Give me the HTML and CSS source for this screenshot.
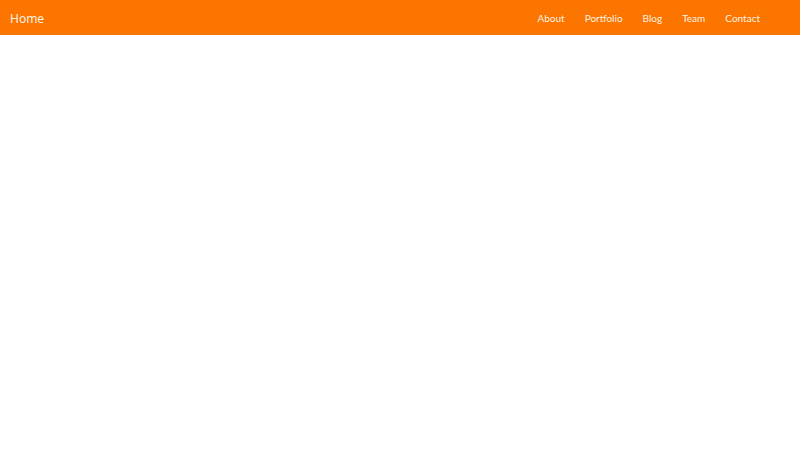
FILE: index.html
```html
<!DOCTYPE html>
<html lang="en">
<head>
<meta charset="utf-8">
<title>Home</title>
<link rel="stylesheet" href="styles.css">
</head>
<body>
<nav class="navbar">
  <a class="brand" href="#">Home</a>
  <ul class="links">
    <li><a href="#">About</a></li>
    <li><a href="#">Portfolio</a></li>
    <li><a href="#">Blog</a></li>
    <li><a href="#">Team</a></li>
    <li><a href="#">Contact</a></li>
  </ul>
</nav>
</body>
</html>
```
FILE: styles.css
```css
body {
  margin: 0;
  background: #fff;
  font-family: "Noto Sans", "Open Sans", sans-serif;
}

.navbar {
  display: flex;
  align-items: center;
  justify-content: space-between;
  padding: 9px 40px 7px 10px;
  background: #fb7500;
  line-height: 19px;
}

.navbar a {
  color: #fff3e0;
  text-decoration: none;
}

.brand {
  font-size: 12px;
}

.links {
  display: flex;
  gap: 20px;
  margin: 0;
  padding: 0;
  list-style: none;
  font-family: Lato, "Noto Sans", sans-serif;
  font-size: 10px;
}
```
